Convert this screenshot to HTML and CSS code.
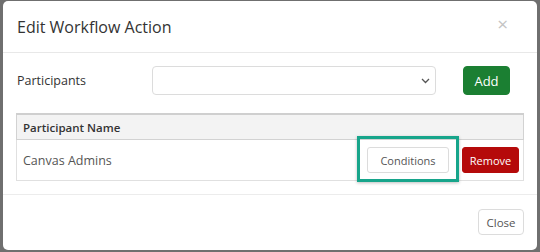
FILE: index.html
```html
<!DOCTYPE html>
<html lang="en">
  <head>
    <meta charset="UTF-8" />
    <title>Edit Workflow Action</title>
    <link rel="stylesheet" href="styles.css">
  </head>
  <body>
    <div class="modal">
      <div class="modal-header">
        <h4 class="modal-title">Edit Workflow Action</h4>
        <span class="close-x">&times;</span>
      </div>

      <div class="modal-body">
        <div class="form-row">
          <label class="form-label">Participants</label>
          <div class="select-box">
            <svg width="9" height="6" viewBox="0 0 9 6">
              <path d="M1 1 L4.5 4.5 L8 1" fill="none" stroke="#555" stroke-width="1.3" />
            </svg>
          </div>
          <button class="btn btn-add">Add</button>
        </div>

        <table class="participants">
          <thead>
            <tr><th>Participant Name</th></tr>
          </thead>
          <tbody>
            <tr>
              <td>
                <div class="cell-row">
                  <span>Canvas Admins</span>
                  <div class="actions">
                    <span class="highlight-wrap">
                      <button class="btn btn-conditions">Conditions</button>
                      <span class="highlight"></span>
                    </span>
                    <button class="btn btn-remove">Remove</button>
                  </div>
                </div>
              </td>
            </tr>
          </tbody>
        </table>
      </div>

      <div class="modal-footer">
        <button class="btn btn-close">Close</button>
      </div>
    </div>
  </body>
</html>
```

FILE: styles.css
```css
body {
  margin: 0;
  padding: 1px 0 0 3px;
  background-color: #6f6f6f;
  font-family: "Open Sans", Arial, sans-serif;
  color: #333;
}

.modal {
  width: 534px;
  height: 249px;
  background-color: #fff;
  border-radius: 5px;
  display: flex;
  flex-direction: column;
}

.modal-header {
  height: 51px;
  border-bottom: 1px solid #e8e8e8;
  display: flex;
  align-items: center;
  justify-content: space-between;
  padding: 0 29px 0 14px;
}

.modal-title {
  margin: 0;
  font-size: 16px;
  font-weight: 400;
  color: #333;
}

.close-x {
  font-size: 19px;
  color: #c4c4c4;
  line-height: 1;
  position: relative;
  top: -2px;
}

.modal-body {
  padding: 13px;
}

.form-row {
  display: flex;
  align-items: center;
}

.form-label {
  width: 135px;
  font-size: 12.5px;
  color: #333;
  padding-left: 1px;
}

.select-box {
  width: 282px;
  height: 27px;
  border: 1px solid #dcdcdc;
  border-radius: 4px;
  display: flex;
  align-items: center;
  justify-content: flex-end;
}

.select-box svg {
  margin-right: 5px;
}

.btn {
  font-family: "Open Sans", Arial, sans-serif;
  font-size: 11px;
  border-radius: 4px;
  cursor: pointer;
  padding: 0;
}

.btn-add {
  margin-left: 27px;
  width: 47px;
  height: 29px;
  background-color: #1b7f32;
  border: 1px solid #1b7f32;
  color: #fff;
  font-size: 13px;
}

.participants {
  width: 100%;
  margin-top: 18px;
  border-collapse: collapse;
  font-size: 12.5px;
}

.participants th {
  text-align: left;
  font-size: 11.5px;
  font-weight: 600;
  background-color: #f3f3f3;
  border: 1px solid #d2d2d2;
  border-top: 2px solid #cfcfcf;
  height: 24px;
  padding: 0 6px;
}

.participants td {
  border: 1px solid #e0e0e0;
  height: 40px;
  padding: 0 4px 0 6px;
  color: #555;
}

.cell-row {
  display: flex;
  align-items: center;
  justify-content: space-between;
}

.actions {
  display: flex;
  align-items: center;
  gap: 13px;
}

.highlight-wrap {
  position: relative;
  display: inline-flex;
}

.highlight {
  position: absolute;
  left: -10px;
  right: -10px;
  top: -11px;
  bottom: -9px;
  border: 3px solid #17a58b;
  box-shadow: 0 1px 3px rgba(0, 0, 0, 0.25);
  pointer-events: none;
}

.btn-conditions {
  width: 82px;
  height: 26px;
  background-color: #fff;
  border: 1px solid #dcdcdc;
  color: #555;
  border-radius: 3px;
}

.btn-remove {
  width: 57px;
  height: 26px;
  background-color: #b50a0a;
  border: 1px solid #b50a0a;
  color: #fff;
  border-radius: 3px;
}

.modal-footer {
  border-top: 1px solid #ececec;
  padding: 14px 13px;
  display: flex;
  justify-content: flex-end;
}

.btn-close {
  width: 46px;
  height: 26px;
  font-size: 11.5px;
  background-color: #fff;
  border: 1px solid #dcdcdc;
  color: #555;
}
```
